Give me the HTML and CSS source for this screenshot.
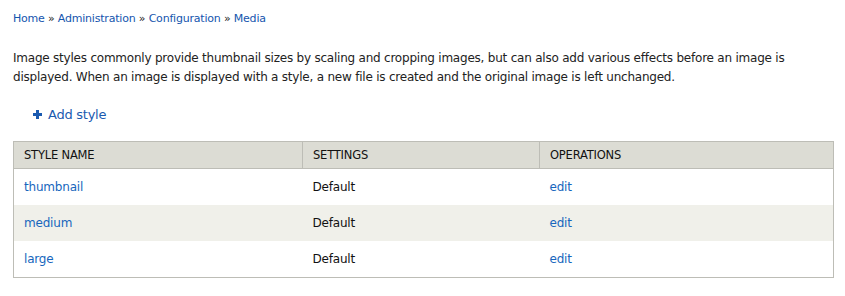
FILE: index.html
```html
<!DOCTYPE html>
<html>
<head>
<meta charset="utf-8">
<link rel="stylesheet" href="styles.css">
</head>
<body>
<div class="page">
  <nav class="breadcrumb">
    <a href="#">Home</a> » <a href="#">Administration</a> » <a href="#">Configuration</a> » <a href="#">Media</a>
  </nav>
  <p class="help">Image styles commonly provide thumbnail sizes by scaling and cropping images, but can also add various effects before an image is displayed. When an image is displayed with a style, a new file is created and the original image is left unchanged.</p>
  <ul class="action-links">
    <li><a href="#" class="action"><svg class="plus" width="9" height="9" viewBox="0 0 9 9"><path d="M3 0h3v3h3v3h-3v3h-3v-3h-3v-3h3z" fill="#1a5ab0"/></svg><span>Add style</span></a></li>
  </ul>
  <table class="styles">
    <thead>
      <tr><th class="c1">STYLE NAME</th><th class="c2">SETTINGS</th><th class="c3">OPERATIONS</th></tr>
    </thead>
    <tbody>
      <tr class="odd"><td><a href="#">thumbnail</a></td><td>Default</td><td><a href="#">edit</a></td></tr>
      <tr class="even"><td><a href="#">medium</a></td><td>Default</td><td><a href="#">edit</a></td></tr>
      <tr class="odd"><td><a href="#">large</a></td><td>Default</td><td><a href="#">edit</a></td></tr>
    </tbody>
  </table>
</div>
</body>
</html>
```
FILE: styles.css
```css
html, body { margin: 0; padding: 0; background: #fff; }
body {
  font-family: "DejaVu Sans", sans-serif;
  color: #222;
}
a { color: #1766bd; text-decoration: none; }
.page { padding: 12px 11px 0 13px; }
.breadcrumb {
  font-size: 11px;
  letter-spacing: -0.2px;
  line-height: 14px;
  color: #222;
}
.breadcrumb a { color: #1555ae; }
.help {
  margin: 23px 0 0;
  font-size: 12px;
  letter-spacing: -0.22px;
  line-height: 18.5px;
}
.action-links {
  list-style: none;
  margin: 18px 0 0;
  padding: 0 0 0 20px;
}
.action {
  display: inline-flex;
  align-items: center;
  gap: 6px;
  color: #1a5ab0;
  font-size: 13px;
  letter-spacing: -0.25px;
  line-height: 18px;
}
.plus { display: block; }
.styles {
  margin-top: 17px;
  width: 821px;
  border-collapse: collapse;
  border: 1px solid #bdbdb6;
  font-size: 12px;
  letter-spacing: -0.2px;
}
.styles th {
  background: #dcdcd4;
  border: 1px solid #bdbdb6;
  text-align: left;
  font-weight: normal;
  font-size: 11.5px;
  height: 26px;
  padding: 0 10px;
  color: #111;
}
.c1 { width: 268px; }
.c2 { width: 216px; }
.styles td {
  height: 36px;
  padding: 0 10px;
  color: #111;
}
.styles tr.even td { background: #f0f0ea; }
```
